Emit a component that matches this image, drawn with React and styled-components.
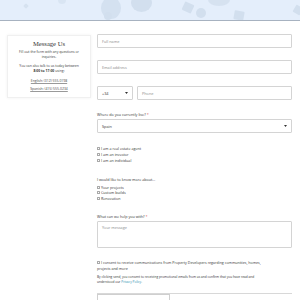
import React from "react";
import styled, { createGlobalStyle } from "styled-components";

const Global = createGlobalStyle`
  html, body { margin: 0; padding: 0; background: #fff; }
  body { font-family: "Open Sans", "Liberation Sans", sans-serif; color: #333; overflow: hidden; }
  * { box-sizing: border-box; }
`;

const Hero = styled.header`
  position: relative;
  height: 21px;
  background: #e4eefb;
  border-bottom: 1px solid #a7b2c0;
  overflow: hidden;
`;

const Shape = styled.span`
  position: absolute;
  background: #d2dfee;
  border-radius: ${(p) => (p.$round ? "50%" : "1px")};
  transform: rotate(${(p) => p.$rot || 0}deg);
  opacity: ${(p) => p.$op || 1};
`;

const Main = styled.main`
  display: flex;
  align-items: flex-start;
  gap: 6px;
  padding: 13px 8px 0 7px;
`;

const Card = styled.aside`
  flex: 0 0 84px;
  margin-top: 1px;
  padding: 4px 3px 6px;
  background: #fff;
  border: 1px solid #f0f0f0;
  box-shadow: 0 0 3px rgba(0, 0, 0, 0.06);
  text-align: center;
  font-size: 3.4px;
  line-height: 5px;
  color: #3a3a3a;
`;

const CardTitle = styled.h2`
  margin: 0 0 2px;
  font-family: "Liberation Serif", serif;
  font-weight: 400;
  font-size: 6.6px;
  line-height: 7px;
  color: #333;
`;

const P = styled.p`
  margin: 0 0 ${(p) => p.$mb || 0}px;
  white-space: nowrap;
`;

const Bold = styled.b`
  font-weight: 700;
`;

const PhoneLink = styled.a`
  display: block;
  color: #444;
  text-decoration: underline;
  text-decoration-color: #999;
  text-decoration-thickness: 0.4px;
  margin-top: ${(p) => p.$mt || 0}px;
`;

const Form = styled.form`
  flex: 1;
  display: flex;
  flex-direction: column;
`;

const Field = styled.div`
  height: 14px;
  border: 1px solid #d4d4d4;
  border-radius: 1px;
  background: #fff;
  display: flex;
  align-items: center;
  justify-content: space-between;
  padding: 0 4px;
  font-size: 3.8px;
  color: ${(p) => (p.$value ? "#333" : "#8a8a8a")};
  margin-bottom: ${(p) => p.$mb ?? 12}px;
  flex: ${(p) => p.$flex || "none"};
  width: ${(p) => (p.$w ? p.$w + "px" : "auto")};
`;

const Row = styled.div`
  display: flex;
  gap: 4px;
`;

const Caret = styled.svg`
  width: 3px;
  height: 2px;
  fill: #333;
`;

const Label = styled.div`
  font-size: 3.7px;
  line-height: 5px;
  color: #333;
  margin-bottom: ${(p) => p.$mb ?? 2}px;
`;

const Star = styled.span`
  color: #d9534f;
`;

const CheckGroup = styled.div`
  display: flex;
  flex-direction: column;
  gap: 0.8px;
  margin-bottom: ${(p) => p.$mb}px;
`;

const Check = styled.label`
  display: flex;
  align-items: center;
  gap: 1px;
  font-size: 3.7px;
  line-height: 5px;
  color: #333;
`;

const Box = styled.span`
  width: 3px;
  height: 3px;
  border: 0.5px solid #a8a8a8;
  border-radius: 0.5px;
  flex: none;
`;

const TextArea = styled.div`
  height: 27px;
  border: 1px solid #d4d4d4;
  border-radius: 1px;
  padding: 3px 4px;
  font-size: 3.8px;
  color: #8a8a8a;
  margin-bottom: 12px;
`;

const Consent = styled.div`
  font-size: 3.6px;
  line-height: 6px;
  color: #333;
  margin-bottom: 3px;
`;

const InlineBox = styled(Box)`
  display: inline-block;
  vertical-align: middle;
  margin-right: 1px;
  margin-top: -1px;
`;

const Fine = styled.div`
  font-size: 3.2px;
  line-height: 5px;
  color: #333;
  margin-bottom: 8px;
  white-space: nowrap;
`;

const Link = styled.a`
  color: #2c8fb0;
`;

const Footer = styled.div`
  border-top: 1px solid #d8d8d8;
  display: flex;
`;

const Submit = styled.button`
  width: 73px;
  height: 14px;
  border: 1px solid #cfcfcf;
  background: #fff;
`;

const shapes = [
  { l: 24, t: 4, w: 4, h: 4, rot: 45, op: 0.8 },
  { l: 58, t: -4, w: 8, h: 8, round: true, op: 0.6 },
  { l: 101, t: -3, w: 20, h: 22, round: true, op: 0.9 },
  { l: 104, t: 12, w: 8, h: 8, round: true },
  { l: 131, t: -6, w: 21, h: 18, round: true },
  { l: 183, t: 3, w: 10, h: 9, rot: 25 },
  { l: 196, t: 8, w: 10, h: 10, round: true },
  { l: 208, t: -6, w: 22, h: 12, round: true, op: 0.8 },
  { l: 234, t: 11, w: 10, h: 9, rot: 10 },
  { l: 294, t: 6, w: 8, h: 8, rot: 30 },
];

const Tri = () => (
  <Caret viewBox="0 0 6 4">
    <path d="M0 0h6L3 4z" />
  </Caret>
);

export default function App() {
  return (
    <>
      <Global />
      <Hero>
        {shapes.map((s, i) => (
          <Shape
            key={i}
            $round={s.round}
            $rot={s.rot}
            $op={s.op}
            style={{ left: s.l, top: s.t, width: s.w, height: s.h }}
          />
        ))}
      </Hero>
      <Main>
        <Card>
          <CardTitle>Message Us</CardTitle>
          <P>Fill out the form with any questions or</P>
          <P $mb={4}>inquiries.</P>
          <P>You can also talk to us today between</P>
          <P>
            <Bold>8:00 to 17:00</Bold> using:
          </P>
          <PhoneLink $mt={5}>English: (312) 555-0198</PhoneLink>
          <PhoneLink $mt={3}>Spanish: (415) 555-0234</PhoneLink>
        </Card>
        <Form>
          <Field>Full name</Field>
          <Field>Email address</Field>
          <Row>
            <Field $w={36} $value>
              <span>+34</span>
              <Tri />
            </Field>
            <Field $flex="1">Phone</Field>
          </Row>
          <Label>
            Where do you currently live? <Star>*</Star>
          </Label>
          <Field $value $mb={13}>
            <span>Spain</span>
            <Tri />
          </Field>
          <CheckGroup $mb={14}>
            <Check><Box />I am a real estate agent</Check>
            <Check><Box />I am an investor</Check>
            <Check><Box />I am an individual</Check>
          </CheckGroup>
          <Label $mb={3}>I would like to know more about...</Label>
          <CheckGroup $mb={13}>
            <Check><Box />Your projects</Check>
            <Check><Box />Custom builds</Check>
            <Check><Box />Renovation</Check>
          </CheckGroup>
          <Label $mb={2}>
            What can we help you with? <Star>*</Star>
          </Label>
          <TextArea>Your message</TextArea>
          <Consent>
            <InlineBox />I consent to receive communications from Property Developers regarding communities, homes,
            <br />
            projects and more
          </Consent>
          <Fine>
            By clicking send, you consent to receiving promotional emails from us and confirm that you have read and
            <br />
            understood our <Link>Privacy Policy</Link>.
          </Fine>
          <Footer>
            <Submit />
          </Footer>
        </Form>
      </Main>
    </>
  );
}
